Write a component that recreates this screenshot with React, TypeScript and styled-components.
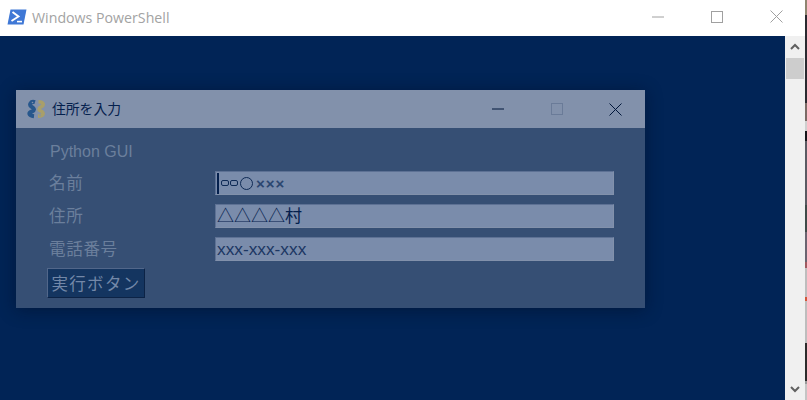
import React from 'react';
import styled, { createGlobalStyle } from 'styled-components';

const GlobalStyle = createGlobalStyle`
  html, body {
    margin: 0;
    padding: 0;
    background: #ffffff;
    overflow: hidden;
  }
`;

const Screen = styled.div`
  width: 807px;
  height: 400px;
  display: flex;
  overflow: hidden;
  font-family: "Liberation Sans", "Noto Sans CJK JP", sans-serif;
`;

const ConsoleWindow = styled.div`
  width: 805px;
  height: 400px;
  display: flex;
  flex-direction: column;
`;

const DesktopEdge = styled.div`
  width: 2px;
  height: 400px;
  background: linear-gradient(
    #8f8570 0 15px,
    #2a2a30 15px 103px,
    #7a6a65 103px 121px,
    #cfcfcf 121px 131px,
    #15151a 131px 141px,
    #5a5a62 141px 205px,
    #3f4a48 205px 232px,
    #6b6470 232px 262px,
    #a05a60 262px 268px,
    #bdbdbd 268px 297px,
    #d2563a 297px 301px,
    #bdbdbd 301px 343px,
    #2c2c2c 343px 381px,
    #9a9a9a 381px 384px,
    #c4c4c4 384px
  );
`;

const TitleBar = styled.div`
  height: 36px;
  flex: none;
  background: #ffffff;
  display: flex;
  align-items: center;
`;

const AppIcon = styled.svg`
  width: 20px;
  height: 16px;
  margin-left: 7px;
  margin-top: -2px;
`;

const TitleText = styled.span`
  margin-left: 5px;
  margin-top: -1px;
  font-family: "Open Sans", "Liberation Sans", sans-serif;
  font-size: 14.2px;
  color: #a3a3a3;
  flex: 1;
`;

const CaptionButton = styled.div<{ $width: number }>`
  width: ${(p) => p.$width}px;
  height: 33px;
  align-self: flex-start;
  display: flex;
  align-items: center;
  justify-content: center;
`;

const ConsoleBody = styled.div`
  flex: 1;
  display: flex;
  background: #012456;
`;

const ConsoleArea = styled.div`
  flex: 1;
  padding: 54px 0 0 16px;
`;

const Scrollbar = styled.div`
  width: 20px;
  background: #f0f0f0;
  display: flex;
  flex-direction: column;
  align-items: center;
`;

const ScrollArrow = styled.svg`
  width: 10px;
  height: 8px;
  margin-top: 7px;
  flex: none;
`;

const ScrollThumb = styled.div`
  width: 18px;
  height: 21px;
  margin-top: 7px;
  background: #cdcdcd;
  flex: none;
`;

const ScrollSpacer = styled.div`
  flex: 1;
`;

const ScrollArrowDown = styled(ScrollArrow)`
  margin-top: 0;
  margin-bottom: 7px;
`;

const Dialog = styled.div`
  width: 629px;
  height: 218px;
  display: flex;
  flex-direction: column;
  background: #364f74;
  box-shadow: 0 2px 16px rgba(0, 10, 30, 0.45);
`;

const DialogTitleBar = styled.div`
  height: 38px;
  flex: none;
  background: #8291ab;
  display: flex;
  align-items: center;
`;

const PythonIcon = styled.svg`
  width: 20px;
  height: 20px;
  margin-left: 10px;
`;

const DialogTitle = styled.span`
  margin-left: 6px;
  margin-top: -2px;
  font-family: "Noto Sans CJK JP", sans-serif;
  font-size: 13.8px;
  color: #04204d;
  flex: 1;
`;

const DialogCaption = styled.div`
  width: 59px;
  height: 38px;
  display: flex;
  align-items: center;
  justify-content: center;
`;

const DialogBody = styled.div`
  display: flex;
  flex-direction: column;
  padding: 14px 31px 0 33px;
`;

const Heading = styled.div`
  height: 20px;
  line-height: 20px;
  margin-left: 1px;
  font-size: 16px;
  color: #6b7f9c;
`;

const Rows = styled.div`
  display: flex;
  flex-direction: column;
  gap: 8px;
  margin-top: 9px;
`;

const Row = styled.div`
  display: grid;
  grid-template-columns: 166px 399px;
  height: 25px;
  align-items: start;
`;

const Label = styled.span`
  line-height: 24px;
  margin-top: -1px;
  font-family: "Noto Sans CJK JP", sans-serif;
  font-size: 16.5px;
  letter-spacing: 0.7px;
  color: #6b7f9c;
`;

const Field = styled.div`
  height: 24px;
  box-sizing: border-box;
  background: #7a8cab;
  border: 1px solid #5d7194;
  border-right-color: #8291ab;
  border-bottom-color: #8291ab;
  padding-left: 1px;
  display: flex;
  align-items: center;
  color: #0e2a55;
  white-space: nowrap;
`;

const Caret = styled.span`
  width: 2px;
  height: 21px;
  background: #04204d;
  margin-right: 2px;
`;

const Squares = styled.span`
  display: inline-flex;
  align-items: center;
  gap: 1px;
`;

const TinyCircle = styled.span`
  width: 6px;
  height: 4px;
  border: 1px solid #0e2a55;
  border-radius: 2px;
`;

const BigCircle = styled.span`
  width: 11px;
  height: 11px;
  margin-left: 1px;
  border: 1px solid #0e2a55;
  border-radius: 50%;
`;

const Crosses = styled.span`
  margin-left: 3px;
  font-size: 15px;
  font-weight: bold;
  letter-spacing: 1px;
  color: #2b4670;
`;

const Triangles = styled.span`
  margin-top: -3px;
  font-family: "Noto Sans CJK JP", sans-serif;
  font-size: 17px;
  color: #04204d;
`;

const Phone = styled.span`
  font-size: 17.3px;
  color: #1c3763;
`;

const RunButton = styled.button`
  width: 98px;
  height: 30px;
  margin: 6px 0 0 -2px;
  padding: 0;
  background: #143560;
  border: 1px solid #52678a;
  border-right-color: #0c2346;
  border-bottom-color: #0c2346;
  font-family: "Noto Sans CJK JP", sans-serif;
  font-size: 16.5px;
  letter-spacing: 1.3px;
  color: #7388a8;
`;

const App: React.FC = () => {
  return (
    <Screen>
      <GlobalStyle />
      <ConsoleWindow>
        <TitleBar>
          <AppIcon viewBox="0 0 20 16">
            <path d="M3.5 0.5H19.5L16.5 15.5H0.5Z" fill="#3f78d6" />
            <path d="M5.5 3L11.5 7.5L4.5 12" fill="none" stroke="#ffffff" strokeWidth="1.9" />
            <path d="M10 12.6H15" stroke="#ffffff" strokeWidth="1.6" />
          </AppIcon>
          <TitleText>Windows PowerShell</TitleText>
          <CaptionButton $width={58}>
            <svg width="12" height="2" viewBox="0 0 12 2">
              <path d="M0 1H12" stroke="#a0a0a0" strokeWidth="1" />
            </svg>
          </CaptionButton>
          <CaptionButton $width={60}>
            <svg width="12" height="12" viewBox="0 0 12 12">
              <rect x="0.5" y="0.5" width="11" height="11" fill="none" stroke="#a0a0a0" />
            </svg>
          </CaptionButton>
          <CaptionButton $width={58}>
            <svg width="13" height="13" viewBox="0 0 13 13">
              <path d="M0.5 0.5L12.5 12.5M12.5 0.5L0.5 12.5" stroke="#a0a0a0" strokeWidth="1" />
            </svg>
          </CaptionButton>
        </TitleBar>
        <ConsoleBody>
          <ConsoleArea>
            <Dialog>
              <DialogTitleBar>
                <PythonIcon viewBox="0 0 20 20">
                  <path
                    d="M9 3.2C4.5 1.8 2.8 6 5.6 7.8C8.6 9.6 8.8 11 6 12.4C2 14 2.6 16.6 8 17.2"
                    fill="none"
                    stroke="#27578c"
                    strokeWidth="4"
                  />
                  <path
                    d="M12.5 2.8C17.5 3 18.6 6 15.4 7.6C12.4 9.2 12.4 11 15 12.2C18.8 14 17.4 17 12 17.2"
                    fill="none"
                    stroke="#a89f6a"
                    strokeWidth="3.6"
                  />
                  <circle cx="6.5" cy="3.5" r="0.8" fill="#8291ab" />
                  <circle cx="14" cy="16.5" r="0.8" fill="#8291ab" />
                </PythonIcon>
                <DialogTitle>住所を入力</DialogTitle>
                <DialogCaption>
                  <svg width="12" height="2" viewBox="0 0 12 2">
                    <path d="M0 1H12" stroke="#00163a" strokeWidth="1" />
                  </svg>
                </DialogCaption>
                <DialogCaption>
                  <svg width="12" height="12" viewBox="0 0 12 12">
                    <rect x="0.5" y="0.5" width="11" height="11" fill="none" stroke="#6a7b98" />
                  </svg>
                </DialogCaption>
                <DialogCaption>
                  <svg width="13" height="13" viewBox="0 0 13 13">
                    <path d="M0.5 0.5L12.5 12.5M12.5 0.5L0.5 12.5" stroke="#00163a" strokeWidth="1" />
                  </svg>
                </DialogCaption>
              </DialogTitleBar>
              <DialogBody>
                <Heading>Python GUI</Heading>
                <Rows>
                  <Row>
                    <Label>名前</Label>
                    <Field>
                      <Caret />
                      <Squares>
                        <TinyCircle />
                        <TinyCircle />
                        <BigCircle />
                      </Squares>
                      <Crosses>×××</Crosses>
                    </Field>
                  </Row>
                  <Row>
                    <Label>住所</Label>
                    <Field>
                      <Triangles>△△△△村</Triangles>
                    </Field>
                  </Row>
                  <Row>
                    <Label>電話番号</Label>
                    <Field>
                      <Phone>xxx-xxx-xxx</Phone>
                    </Field>
                  </Row>
                </Rows>
                <RunButton>実行ボタン</RunButton>
              </DialogBody>
            </Dialog>
          </ConsoleArea>
          <Scrollbar>
            <ScrollArrow viewBox="0 0 10 8">
              <path d="M1 6L5 2L9 6" fill="none" stroke="#606060" strokeWidth="2" />
            </ScrollArrow>
            <ScrollThumb />
            <ScrollSpacer />
            <ScrollArrowDown viewBox="0 0 10 8">
              <path d="M1 2L5 6L9 2" fill="none" stroke="#606060" strokeWidth="2" />
            </ScrollArrowDown>
          </Scrollbar>
        </ConsoleBody>
      </ConsoleWindow>
      <DesktopEdge />
    </Screen>
  );
};

export default App;
